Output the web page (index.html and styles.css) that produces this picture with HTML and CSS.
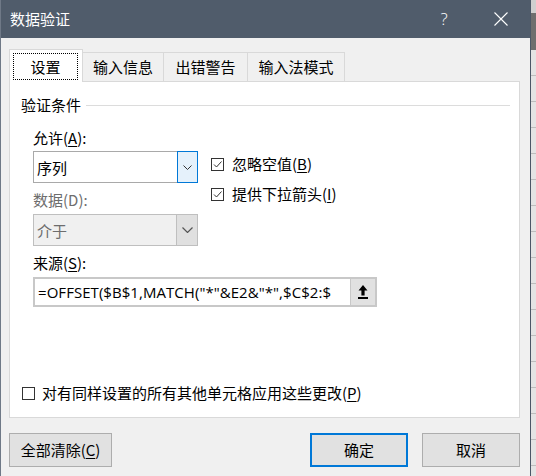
FILE: index.html
```html
<!DOCTYPE html>
<html lang="zh-CN">
<head>
<meta charset="utf-8">
<title>数据验证</title>
<link rel="stylesheet" href="styles.css">
</head>
<body>
<div class="screen">
  <div class="dialog">
    <div class="titlebar">
      <span class="tb-title">数据验证</span>
      <span class="tb-help">?</span>
      <span class="tb-close">
        <svg width="16" height="16" viewBox="0 0 16 16"><path d="M1.5 1.5 L14.5 14.5 M14.5 1.5 L1.5 14.5" stroke="#fff" stroke-width="1.1" fill="none"/></svg>
      </span>
    </div>
    <div class="body">
      <div class="tabs">
        <div class="tab sel"><span class="focus">设置</span></div>
        <div class="tab t2">输入信息</div>
        <div class="tab t3">出错警告</div>
        <div class="tab t4">输入法模式</div>
      </div>
      <div class="panel">
        <div class="group-head"><span class="group-title">验证条件</span><span class="rule"></span></div>
        <div class="cond">
          <div class="cond-left">
            <div class="label">允许(<u>A</u>):</div>
            <div class="combo">
              <span class="combo-text">序列</span>
              <span class="combo-btn"><svg width="9" height="5" viewBox="0 0 9 5"><path d="M0.5 0.5 L4.5 4.5 L8.5 0.5" stroke="#333" stroke-width="1" fill="none"/></svg></span>
            </div>
            <div class="label dis gap7">数据(D):</div>
            <div class="combo disabled">
              <span class="combo-text">介于</span>
              <span class="combo-btn"><svg width="11" height="6" viewBox="0 0 11 6"><path d="M0.5 0.5 L5.5 5.5 L10.5 0.5" stroke="#555" stroke-width="1.2" fill="none"/></svg></span>
            </div>
          </div>
          <div class="checks">
            <div class="check">
              <span class="box"><svg width="11" height="11" viewBox="0 0 11 11"><path d="M2 5.5 L4.5 8 L9.5 2.5" stroke="#333" stroke-width="1" fill="none"/></svg></span>
              <span>忽略空值(<u>B</u>)</span>
            </div>
            <div class="check">
              <span class="box"><svg width="11" height="11" viewBox="0 0 11 11"><path d="M2 5.5 L4.5 8 L9.5 2.5" stroke="#333" stroke-width="1" fill="none"/></svg></span>
              <span>提供下拉箭头(<u>I</u>)</span>
            </div>
          </div>
        </div>
        <div class="label src-label">来源(<u>S</u>):</div>
        <div class="source">
          <span class="source-text">=OFFSET($B$1,MATCH("*"&amp;E2&amp;"*",$C$2:$</span>
          <span class="source-btn">
            <svg width="12" height="16" viewBox="0 0 12 16"><path d="M6 1 L10.5 6.5 L7.6 6.5 L7.6 11.5 L4.4 11.5 L4.4 6.5 L1.5 6.5 Z" fill="#000"/><rect x="1" y="13" width="10" height="2" fill="#000"/></svg>
          </span>
        </div>
        <div class="spacer"></div>
        <div class="check apply">
          <span class="box"></span>
          <span>对有同样设置的所有其他单元格应用这些更改(<u>P</u>)</span>
        </div>
      </div>
      <div class="buttons">
        <div class="btn clear">全部清除(<u>C</u>)</div>
        <div class="btn ok">确定</div>
        <div class="btn cancel">取消</div>
      </div>
    </div>
  </div>
  <div class="sheet">
    <div class="sheet-head"></div>
    <div class="sheet-bar"></div>
    <div class="sheet-grid"></div>
  </div>
</div>
</body>
</html>
```

FILE: styles.css
```css
* { box-sizing: border-box; }

html, body {
  margin: 0;
  padding: 0;
}

body {
  width: 536px;
  height: 476px;
  overflow: hidden;
  font-family: "Noto Sans CJK SC", "Microsoft YaHei", sans-serif;
  font-size: 15px;
  color: #000;
  background: #e6e6e6;
}

u { text-decoration: underline; text-underline-offset: 2px; text-decoration-thickness: 1px; }

.screen {
  display: flex;
  width: 536px;
  height: 476px;
}

.dialog {
  width: 531px;
  height: 476px;
  display: flex;
  flex-direction: column;
  background: #f0f0f0;
  border-left: 1px solid #6f7987;
  border-right: 1px solid #4b5767;
}

/* title bar */
.titlebar {
  height: 38px;
  flex: none;
  display: flex;
  align-items: center;
  background: #505c6b;
  color: #fff;
  padding-left: 9px;
}
.tb-title { flex: 1; font-size: 15px; line-height: 20px; }
.tb-help {
  width: 56px;
  text-align: center;
  font-size: 17px;
  font-weight: 300;
  line-height: 20px;
  font-family: "Open Sans", "Noto Sans", sans-serif;
}
.tb-close {
  width: 58px;
  height: 38px;
  display: flex;
  align-items: center;
  justify-content: center;
}

/* body */
.body {
  flex: 1;
  display: flex;
  flex-direction: column;
  padding: 11px 10px 0 8px;
}

.tabs {
  display: flex;
  align-items: flex-end;
  height: 33px;
  position: relative;
  z-index: 1;
}
.tab {
  height: 29px;
  margin-bottom: 1px;
  border: 1px solid #d9d9d9;
  border-bottom: none;
  background: #f0f0f0;
  display: flex;
  align-items: center;
  justify-content: center;
  line-height: 20px;
  margin-left: -1px;
}
.tab.sel {
  width: 74px;
  height: 33px;
  margin-bottom: 0;
  margin-left: 0;
  background: #fff;
  padding: 3px 4px 2px 3px;
  align-items: stretch;
  justify-content: stretch;
}
.focus {
  flex: 1;
  border: 1px dotted #000;
  display: flex;
  align-items: center;
  justify-content: center;
}
.t2 { width: 82px; }
.t3 { width: 85px; }
.t4 { width: 98px; }

.panel {
  height: 337px;
  margin-top: -1px;
  background: #fff;
  border: 1px solid #d9d9d9;
  display: flex;
  flex-direction: column;
}

.group-head {
  margin-top: 13px;
  height: 20px;
  display: flex;
  align-items: center;
  padding: 0 9px 0 11px;
}
.group-title { line-height: 20px; }
.rule {
  flex: 1;
  height: 1px;
  background: #dcdcdc;
  margin-left: 5px;
  margin-top: 1px;
}

.cond {
  margin-top: 13px;
  padding-left: 23px;
  display: flex;
}
.cond-left { width: 165px; }

.label { line-height: 20px; height: 20px; }
.label.dis { color: #6d6d6d; }
.gap7 { margin-top: 7px; }

.combo {
  margin-top: 3px;
  height: 32px;
  display: flex;
  border: 1px solid #a9a9a9;
  background: #fff;
}
.combo-text {
  flex: 1;
  padding-left: 3px;
  display: flex;
  align-items: center;
}
.combo-btn {
  width: 21px;
  display: flex;
  align-items: center;
  justify-content: center;
  background: #e5f1fb;
  border: 1px solid #0078d7;
  margin: -1px -1px -1px 0;
}
.combo.disabled {
  margin-top: 4px;
  border: 1px solid #bfbfbf;
  background: #f0f0f0;
  color: #6d6d6d;
}
.combo.disabled .combo-btn {
  background: #e0e0e0;
  border: none;
  border-left: 1px solid #bfbfbf;
  margin: 0;
}

.checks {
  margin-left: 13px;
  padding-top: 26px;
  display: flex;
  flex-direction: column;
  gap: 10px;
}
.check {
  display: flex;
  align-items: center;
  height: 20px;
  line-height: 20px;
}
.box {
  width: 13px;
  height: 13px;
  border: 1px solid #333;
  background: #fff;
  display: flex;
  align-items: center;
  justify-content: center;
  margin-right: 8px;
  flex: none;
}

.src-label {
  margin-top: 7px;
  margin-left: 23px;
}
.source {
  margin-top: 4px;
  margin-left: 23px;
  width: 344px;
  height: 30px;
  border: 2px solid #c8c8c8;
  display: flex;
  background: #fff;
}
.source-text {
  flex: 1;
  overflow: hidden;
  white-space: nowrap;
  padding-left: 3px;
  line-height: 26px;
  font-family: "Open Sans", "Noto Sans", sans-serif;
  font-size: 15px;
  letter-spacing: 0.05px;
}
.source-btn {
  width: 25px;
  background: #e1e1e1;
  border-left: 1px solid #c8c8c8;
  display: flex;
  align-items: center;
  justify-content: center;
}

.spacer { flex: 1; }

.apply {
  margin: 0 0 14px 12px;
}
.apply .box { margin-right: 7px; }

.buttons {
  margin-top: 15px;
  height: 34px;
  display: flex;
  gap: 14px;
}
.btn {
  height: 34px;
  width: 98px;
  background: #e1e1e1;
  border: 1px solid #adadad;
  display: flex;
  align-items: center;
  justify-content: center;
  line-height: 20px;
}
.btn.clear { width: 103px; margin-right: auto; }
.btn.ok { border: 2px solid #0078d7; }

/* spreadsheet strip behind the dialog */
.sheet {
  flex: 1;
  display: flex;
  flex-direction: column;
}
.sheet-head { height: 13px; background: #cfcfcf; }
.sheet-bar { height: 37px; background: #6e6e6e; }
.sheet-grid {
  flex: 1;
  background: repeating-linear-gradient(to bottom, #e4e4e4 0 25px, #bdbdbd 25px 26px);
}
```
